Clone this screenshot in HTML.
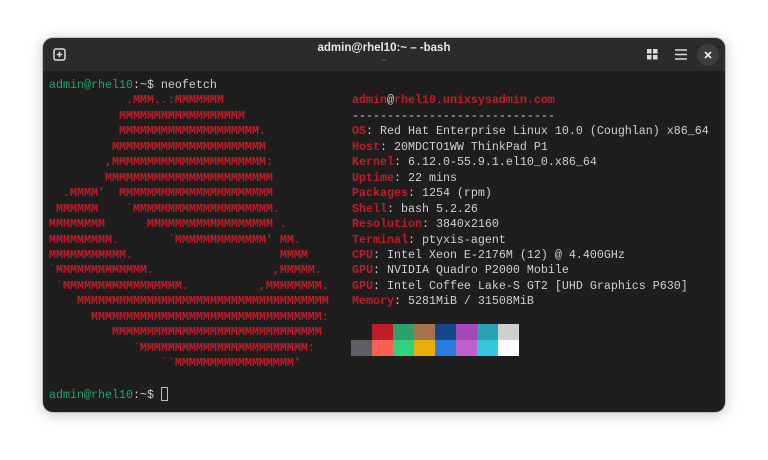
<!DOCTYPE html>
<html><head><style>
html,body{margin:0;padding:0;width:768px;height:460px;background:#fff;overflow:hidden}
.win{position:absolute;left:43px;top:38px;width:682px;height:374px;background:#1e1e1e;border-radius:10px;overflow:hidden;box-shadow:0 2px 14px rgba(0,0,0,.25),0 0 0 1px rgba(0,0,0,.15)}
.hdr{position:absolute;left:0;top:0;width:682px;height:33px;background:#2b2b2b}
.title{position:absolute;left:0;width:682px;top:4px;text-align:center;font:bold 11.5px "Liberation Sans",sans-serif;color:#e8e8e8}
.sub{position:absolute;left:0;width:682px;top:18px;text-align:center;font:8px "Liberation Sans",sans-serif;color:#888}
.term{position:absolute;top:40px;font:11.67px/15.45px "Liberation Mono",monospace;color:#d0d0d0;white-space:pre;margin:0}
.r{color:#c01c28;font-weight:bold}
.g{color:#26a269}
.blk{position:absolute;width:21px;height:16px}
</style></head><body>
<div class="win">
<div class="hdr">
<svg style="position:absolute;left:10px;top:10px" width="13" height="13" viewBox="0 0 13 13"><rect x="1" y="1" width="11" height="11" rx="2" fill="none" stroke="#ddd" stroke-width="1.5"/><path d="M6.5 3.8v5.4M3.8 6.5h5.4" stroke="#ddd" stroke-width="1.5"/></svg>
<div class="title">admin@rhel10:~ – -bash</div>
<div class="sub">~</div>
<svg style="position:absolute;left:604px;top:11px" width="11" height="11"><rect x="0" y="0" width="4.5" height="4.5" fill="#ddd"/><rect x="6" y="0" width="4.5" height="4.5" fill="#ddd"/><rect x="0" y="6" width="4.5" height="4.5" fill="#ddd"/><rect x="6" y="6" width="4.5" height="4.5" fill="#ddd"/></svg>
<svg style="position:absolute;left:632px;top:11px" width="12" height="11"><path d="M0 1h12M0 5.5h12M0 10h12" stroke="#ddd" stroke-width="1.5"/></svg>
<div style="position:absolute;left:654px;top:6px;width:22px;height:22px;border-radius:11px;background:#3c3c3c"></div>
<svg style="position:absolute;left:661px;top:13px" width="8" height="8"><path d="M1 1l6 6M7 1l-6 6" stroke="#eee" stroke-width="1.6"/></svg>
</div>
<pre class="term" style="left:6px"><span class="g">admin@rhel10</span>:~$ neofetch
<span class="r">           .MMM..:MMMMMMM
          MMMMMMMMMMMMMMMMMM
          MMMMMMMMMMMMMMMMMMMM.
         MMMMMMMMMMMMMMMMMMMMMM
        ,MMMMMMMMMMMMMMMMMMMMMM:
        MMMMMMMMMMMMMMMMMMMMMMMM
  .MMMM'  MMMMMMMMMMMMMMMMMMMMMM
 MMMMMM    `MMMMMMMMMMMMMMMMMMMM.
MMMMMMMM      MMMMMMMMMMMMMMMMMM .
MMMMMMMMM.       `MMMMMMMMMMMMM' MM.
MMMMMMMMMMM.                     MMMM
`MMMMMMMMMMMMM.                 ,MMMMM.
 `MMMMMMMMMMMMMMMMM.          ,MMMMMMMM.
    MMMMMMMMMMMMMMMMMMMMMMMMMMMMMMMMMMMM
      MMMMMMMMMMMMMMMMMMMMMMMMMMMMMMMMM:
         MMMMMMMMMMMMMMMMMMMMMMMMMMMMMM
            `MMMMMMMMMMMMMMMMMMMMMMMM:
                ``MMMMMMMMMMMMMMMMM'</span>

<span class="g">admin@rhel10</span>:~$ <span style="display:inline-block;width:7px;height:14px;border:1px solid #bbb;vertical-align:-3px;box-sizing:border-box"></span></pre>
<pre class="term" style="left:309px;top:55.45px"><span class="r">admin</span>@<span class="r">rhel10.unixsysadmin.com</span>
-----------------------------
<span class="r">OS</span>: Red Hat Enterprise Linux 10.0 (Coughlan) x86_64
<span class="r">Host</span>: 20MDCTO1WW ThinkPad P1
<span class="r">Kernel</span>: 6.12.0-55.9.1.el10_0.x86_64
<span class="r">Uptime</span>: 22 mins
<span class="r">Packages</span>: 1254 (rpm)
<span class="r">Shell</span>: bash 5.2.26
<span class="r">Resolution</span>: 3840x2160
<span class="r">Terminal</span>: ptyxis-agent
<span class="r">CPU</span>: Intel Xeon E-2176M (12) @ 4.400GHz
<span class="r">GPU</span>: NVIDIA Quadro P2000 Mobile
<span class="r">GPU</span>: Intel Coffee Lake-S GT2 [UHD Graphics P630]
<span class="r">Memory</span>: 5281MiB / 31508MiB</pre>
<div class="blk" style="left:329px;top:286px;background:#c01c28"></div>
<div class="blk" style="left:350px;top:286px;background:#2ea06a"></div>
<div class="blk" style="left:371px;top:286px;background:#a2734c"></div>
<div class="blk" style="left:392px;top:286px;background:#12488b"></div>
<div class="blk" style="left:413px;top:286px;background:#a347ba"></div>
<div class="blk" style="left:434px;top:286px;background:#2aa1b3"></div>
<div class="blk" style="left:455px;top:286px;background:#d0cfcc"></div>
<div class="blk" style="left:308px;top:302px;background:#5e5c64"></div>
<div class="blk" style="left:329px;top:302px;background:#f66151"></div>
<div class="blk" style="left:350px;top:302px;background:#33d17a"></div>
<div class="blk" style="left:371px;top:302px;background:#e9ad0c"></div>
<div class="blk" style="left:392px;top:302px;background:#2a7bde"></div>
<div class="blk" style="left:413px;top:302px;background:#c061cb"></div>
<div class="blk" style="left:434px;top:302px;background:#33c7de"></div>
<div class="blk" style="left:455px;top:302px;background:#ffffff"></div>
</div>
</body></html>
